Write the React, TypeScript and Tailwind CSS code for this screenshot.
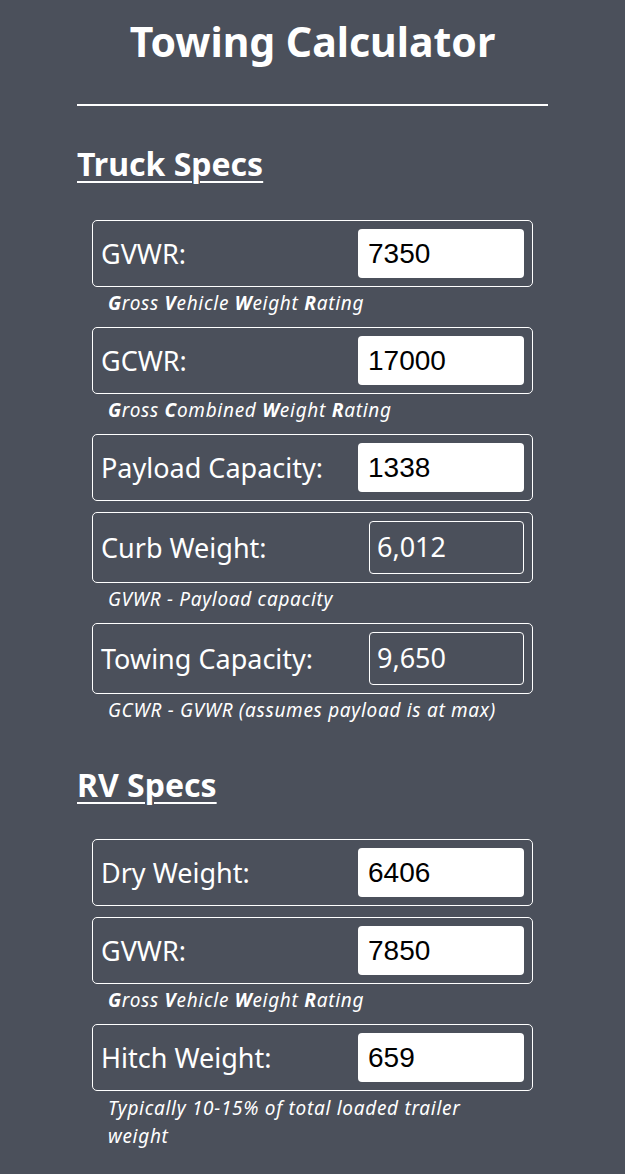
import React from "react";

const font = { fontFamily: '"Noto Sans", "Open Sans", sans-serif' };

function Desc({ children }: { children: React.ReactNode }) {
  return (
    <div className="px-4 pt-[3px] text-[19px] leading-[26px] italic tracking-[0.7px] text-white">{children}</div>
  );
}

function B({ children }: { children: React.ReactNode }) {
  return <span className="font-bold">{children}</span>;
}

function InputRow({ label, value }: { label: string; value: string }) {
  return (
    <div className="mt-[11px] flex h-[67px] items-center justify-between rounded-[5px] border border-white px-2">
      <span className="text-[27px] leading-none text-white">{label}</span>
      <input
        readOnly
        value={value}
        className="h-[49px] w-[166px] rounded-[4px] bg-white pl-[10px] text-[28px] text-black outline-none"
        style={{ fontFamily: '"Liberation Sans", Arial, sans-serif' }}
      />
    </div>
  );
}

function OutputRow({ label, value }: { label: string; value: string }) {
  return (
    <div className="mt-[11px] flex h-[71px] items-center justify-between rounded-[5px] border border-white px-2">
      <span className="text-[27px] leading-none text-white">{label}</span>
      <div className="flex h-[53px] w-[155px] items-center rounded-[4px] border border-white pl-[7px] text-[27px] text-white">
        {value}
      </div>
    </div>
  );
}

export default function App() {
  return (
    <div className="min-h-screen bg-[#4b505b] pt-[13px] pb-8 text-white" style={font}>
      <div className="mx-auto flex w-[471px] flex-col">
        <h1 className="text-center text-[41px] font-bold leading-[56px]">Towing Calculator</h1>
        <hr className="mt-[35px] border-0 border-t-2 border-white" />
        <h2 className="mt-[38px] text-[32px] font-bold leading-[40px] underline decoration-2 underline-offset-[5px]">
          Truck Specs
        </h2>
        <div className="mx-[15px] mt-[25px] flex flex-col">
          <InputRow label="GVWR:" value="7350" />
          <Desc>
            <B>G</B>ross <B>V</B>ehicle <B>W</B>eight <B>R</B>ating
          </Desc>
          <InputRow label="GCWR:" value="17000" />
          <Desc>
            <B>G</B>ross <B>C</B>ombined <B>W</B>eight <B>R</B>ating
          </Desc>
          <InputRow label="Payload Capacity:" value="1338" />
          <OutputRow label="Curb Weight:" value="6,012" />
          <Desc>GVWR - Payload capacity</Desc>
          <OutputRow label="Towing Capacity:" value="9,650" />
          <Desc>GCWR - GVWR (assumes payload is at max)</Desc>
        </div>
        <h2 className="mt-[42px] text-[32px] font-bold leading-[40px] underline decoration-2 underline-offset-[5px]">
          RV Specs
        </h2>
        <div className="mx-[15px] mt-[23px] flex flex-col">
          <InputRow label="Dry Weight:" value="6406" />
          <InputRow label="GVWR:" value="7850" />
          <Desc>
            <B>G</B>ross <B>V</B>ehicle <B>W</B>eight <B>R</B>ating
          </Desc>
          <InputRow label="Hitch Weight:" value="659" />
          <div className="px-4 pt-[3px] text-[19px] leading-[28px] italic tracking-[0.7px] text-white">
            Typically 10-15% of total loaded trailer weight
          </div>
        </div>
      </div>
    </div>
  );
}
